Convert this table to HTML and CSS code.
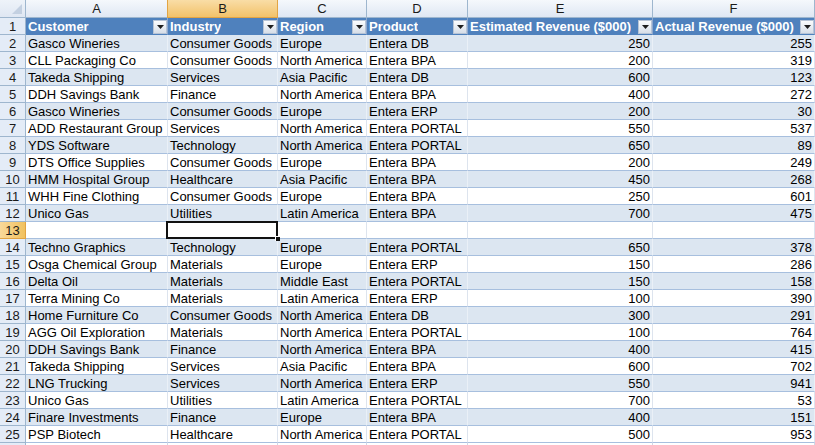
FILE: index.html
```html
<!DOCTYPE html>
<html>
<head>
<meta charset="utf-8">
<link rel="stylesheet" href="styles.css">
</head>
<body>
<div class="sheet">
  <div class="row colhdr">
    <div class="corner"><svg width="25" height="17" viewBox="0 0 25 17"><polygon points="22,4 22,14 12,14" fill="#c3d0e1"/></svg></div>
    <div class="ch">A</div><div class="ch active">B</div><div class="ch">C</div><div class="ch">D</div><div class="ch">E</div><div class="ch">F</div>
  </div>
  <div class="row thead">
    <div class="rh">1</div>
    <div class="th"><span>Customer</span><span class="fb"><svg width="7" height="4" viewBox="0 0 7 4"><polygon points="0,0 7,0 3.5,4" fill="#1e1e1e"/></svg></span></div>
    <div class="th"><span>Industry</span><span class="fb"><svg width="7" height="4" viewBox="0 0 7 4"><polygon points="0,0 7,0 3.5,4" fill="#1e1e1e"/></svg></span></div>
    <div class="th"><span>Region</span><span class="fb"><svg width="7" height="4" viewBox="0 0 7 4"><polygon points="0,0 7,0 3.5,4" fill="#1e1e1e"/></svg></span></div>
    <div class="th"><span>Product</span><span class="fb"><svg width="7" height="4" viewBox="0 0 7 4"><polygon points="0,0 7,0 3.5,4" fill="#1e1e1e"/></svg></span></div>
    <div class="th"><span>Estimated Revenue ($000)</span><span class="fb"><svg width="7" height="4" viewBox="0 0 7 4"><polygon points="0,0 7,0 3.5,4" fill="#1e1e1e"/></svg></span></div>
    <div class="th"><span>Actual Revenue ($000)</span><span class="fb"><svg width="7" height="4" viewBox="0 0 7 4"><polygon points="0,0 7,0 3.5,4" fill="#1e1e1e"/></svg></span></div>
  </div>
  <div class="row band"><div class="rh">2</div><div class="c">Gasco Wineries</div><div class="c">Consumer Goods</div><div class="c">Europe</div><div class="c">Entera DB</div><div class="c n">250</div><div class="c n">255</div></div>
  <div class="row"><div class="rh">3</div><div class="c">CLL Packaging Co</div><div class="c">Consumer Goods</div><div class="c">North America</div><div class="c">Entera BPA</div><div class="c n">200</div><div class="c n">319</div></div>
  <div class="row band"><div class="rh">4</div><div class="c">Takeda Shipping</div><div class="c">Services</div><div class="c">Asia Pacific</div><div class="c">Entera DB</div><div class="c n">600</div><div class="c n">123</div></div>
  <div class="row"><div class="rh">5</div><div class="c">DDH Savings Bank</div><div class="c">Finance</div><div class="c">North America</div><div class="c">Entera BPA</div><div class="c n">400</div><div class="c n">272</div></div>
  <div class="row band"><div class="rh">6</div><div class="c">Gasco Wineries</div><div class="c">Consumer Goods</div><div class="c">Europe</div><div class="c">Entera ERP</div><div class="c n">200</div><div class="c n">30</div></div>
  <div class="row"><div class="rh">7</div><div class="c">ADD Restaurant Group</div><div class="c">Services</div><div class="c">North America</div><div class="c">Entera PORTAL</div><div class="c n">550</div><div class="c n">537</div></div>
  <div class="row band"><div class="rh">8</div><div class="c">YDS Software</div><div class="c">Technology</div><div class="c">North America</div><div class="c">Entera PORTAL</div><div class="c n">650</div><div class="c n">89</div></div>
  <div class="row"><div class="rh">9</div><div class="c">DTS Office Supplies</div><div class="c">Consumer Goods</div><div class="c">Europe</div><div class="c">Entera BPA</div><div class="c n">200</div><div class="c n">249</div></div>
  <div class="row band"><div class="rh">10</div><div class="c">HMM Hospital Group</div><div class="c">Healthcare</div><div class="c">Asia Pacific</div><div class="c">Entera BPA</div><div class="c n">450</div><div class="c n">268</div></div>
  <div class="row"><div class="rh">11</div><div class="c">WHH Fine Clothing</div><div class="c">Consumer Goods</div><div class="c">Europe</div><div class="c">Entera BPA</div><div class="c n">250</div><div class="c n">601</div></div>
  <div class="row band"><div class="rh">12</div><div class="c">Unico Gas</div><div class="c">Utilities</div><div class="c">Latin America</div><div class="c">Entera BPA</div><div class="c n">700</div><div class="c n">475</div></div>
  <div class="row"><div class="rh active">13</div><div class="c"></div><div class="c sel"></div><div class="c"></div><div class="c"></div><div class="c n"></div><div class="c n"></div></div>
  <div class="row band"><div class="rh">14</div><div class="c">Techno Graphics</div><div class="c">Technology</div><div class="c">Europe</div><div class="c">Entera PORTAL</div><div class="c n">650</div><div class="c n">378</div></div>
  <div class="row"><div class="rh">15</div><div class="c">Osga Chemical Group</div><div class="c">Materials</div><div class="c">Europe</div><div class="c">Entera ERP</div><div class="c n">150</div><div class="c n">286</div></div>
  <div class="row band"><div class="rh">16</div><div class="c">Delta Oil</div><div class="c">Materials</div><div class="c">Middle East</div><div class="c">Entera PORTAL</div><div class="c n">150</div><div class="c n">158</div></div>
  <div class="row"><div class="rh">17</div><div class="c">Terra Mining Co</div><div class="c">Materials</div><div class="c">Latin America</div><div class="c">Entera ERP</div><div class="c n">100</div><div class="c n">390</div></div>
  <div class="row band"><div class="rh">18</div><div class="c">Home Furniture Co</div><div class="c">Consumer Goods</div><div class="c">North America</div><div class="c">Entera DB</div><div class="c n">300</div><div class="c n">291</div></div>
  <div class="row"><div class="rh">19</div><div class="c">AGG Oil Exploration</div><div class="c">Materials</div><div class="c">North America</div><div class="c">Entera PORTAL</div><div class="c n">100</div><div class="c n">764</div></div>
  <div class="row band"><div class="rh">20</div><div class="c">DDH Savings Bank</div><div class="c">Finance</div><div class="c">North America</div><div class="c">Entera BPA</div><div class="c n">400</div><div class="c n">415</div></div>
  <div class="row"><div class="rh">21</div><div class="c">Takeda Shipping</div><div class="c">Services</div><div class="c">Asia Pacific</div><div class="c">Entera BPA</div><div class="c n">600</div><div class="c n">702</div></div>
  <div class="row band"><div class="rh">22</div><div class="c">LNG Trucking</div><div class="c">Services</div><div class="c">North America</div><div class="c">Entera ERP</div><div class="c n">550</div><div class="c n">941</div></div>
  <div class="row"><div class="rh">23</div><div class="c">Unico Gas</div><div class="c">Utilities</div><div class="c">Latin America</div><div class="c">Entera PORTAL</div><div class="c n">700</div><div class="c n">53</div></div>
  <div class="row band"><div class="rh">24</div><div class="c">Finare Investments</div><div class="c">Finance</div><div class="c">Europe</div><div class="c">Entera BPA</div><div class="c n">400</div><div class="c n">151</div></div>
  <div class="row"><div class="rh">25</div><div class="c">PSP Biotech</div><div class="c">Healthcare</div><div class="c">North America</div><div class="c">Entera PORTAL</div><div class="c n">500</div><div class="c n">953</div></div>
  <div class="row plain"><div class="rh"></div><div class="c"></div><div class="c"></div><div class="c"></div><div class="c"></div><div class="c"></div><div class="c"></div></div>
</div>
</body>
</html>
```

FILE: styles.css
```css
html, body {
  margin: 0;
  padding: 0;
  background: #ffffff;
  overflow: hidden;
}
body {
  font-family: "Liberation Sans", Arial, sans-serif;
  font-size: 13px;
  color: #000;
}
.sheet {
  width: 815px;
}
.row {
  display: grid;
  grid-template-columns: 26px 142px 110px 89px 101px 185px 162px;
  height: 17px;
}
.row > div {
  box-sizing: border-box;
  white-space: nowrap;
  overflow: hidden;
}
.colhdr {
  height: 18px;
}
.corner, .ch {
  background: linear-gradient(#f5f8fc, #dfe7f3);
  border-right: 1px solid #9eb6ce;
  border-bottom: 1px solid #9eb6ce;
}
.corner {
  background: linear-gradient(#eef3f9, #dfe7f3);
  display: flex;
}
.ch {
  text-align: center;
  line-height: 17px;
  color: #1a1a1a;
}
.ch.active {
  background: linear-gradient(#f9dda6, #f2c26a);
  border-right-color: #e2a443;
  border-bottom-color: #e2a443;
  border-left: 1px solid #e2a443;
  margin-left: -1px;
}
.rh {
  background: #e4ecf7;
  border-right: 1px solid #9eb6ce;
  border-bottom: 1px solid #9eb6ce;
  text-align: center;
  line-height: 17px;
  color: #1a1a1a;
}
.rh.active {
  background: linear-gradient(90deg, #f9d99a, #f1c15f);
  border-bottom-color: #e2a443;
  border-right-color: #e2a443;
}
.th {
  background: #4f81bd;
  color: #ffffff;
  font-weight: bold;
  border-right: 1px solid #8fa9cf;
  border-bottom: 1px solid #4f81bd;
  padding-left: 2px;
  display: flex;
  justify-content: space-between;
  align-items: flex-end;
  line-height: 17px;
}
.th > span:first-child {
  overflow: hidden;
  align-self: flex-start;
}
.fb {
  flex: none;
  box-sizing: border-box;
  width: 14px;
  height: 14px;
  border: 1px solid #b7c4d6;
  background: linear-gradient(#fbfcfd, #d7dee8);
  display: flex;
  align-items: center;
  justify-content: center;
}
.fb svg {
  display: block;
}
.c {
  background: #ffffff;
  border-right: 1px solid #dde4ee;
  border-bottom: 1px solid #a7bfde;
  padding: 0 2px;
  line-height: 17px;
}
.band .c {
  background: #dce6f1;
  border-right-color: #eaf0f7;
}
.plain .c {
  border-bottom-color: #d0d7e5;
  border-right-color: #d0d7e5;
}
.c.n {
  text-align: right;
}
.sel {
  position: relative;
  overflow: visible !important;
}
.sel::after {
  content: "";
  position: absolute;
  left: -2px;
  top: -1px;
  right: -1px;
  bottom: -1px;
  border: 2px solid #111;
}
.sel::before {
  content: "";
  position: absolute;
  right: -3px;
  bottom: -3px;
  width: 4px;
  height: 4px;
  background: #111;
  border-left: 1px solid #fff;
  border-top: 1px solid #fff;
  z-index: 2;
}
```
